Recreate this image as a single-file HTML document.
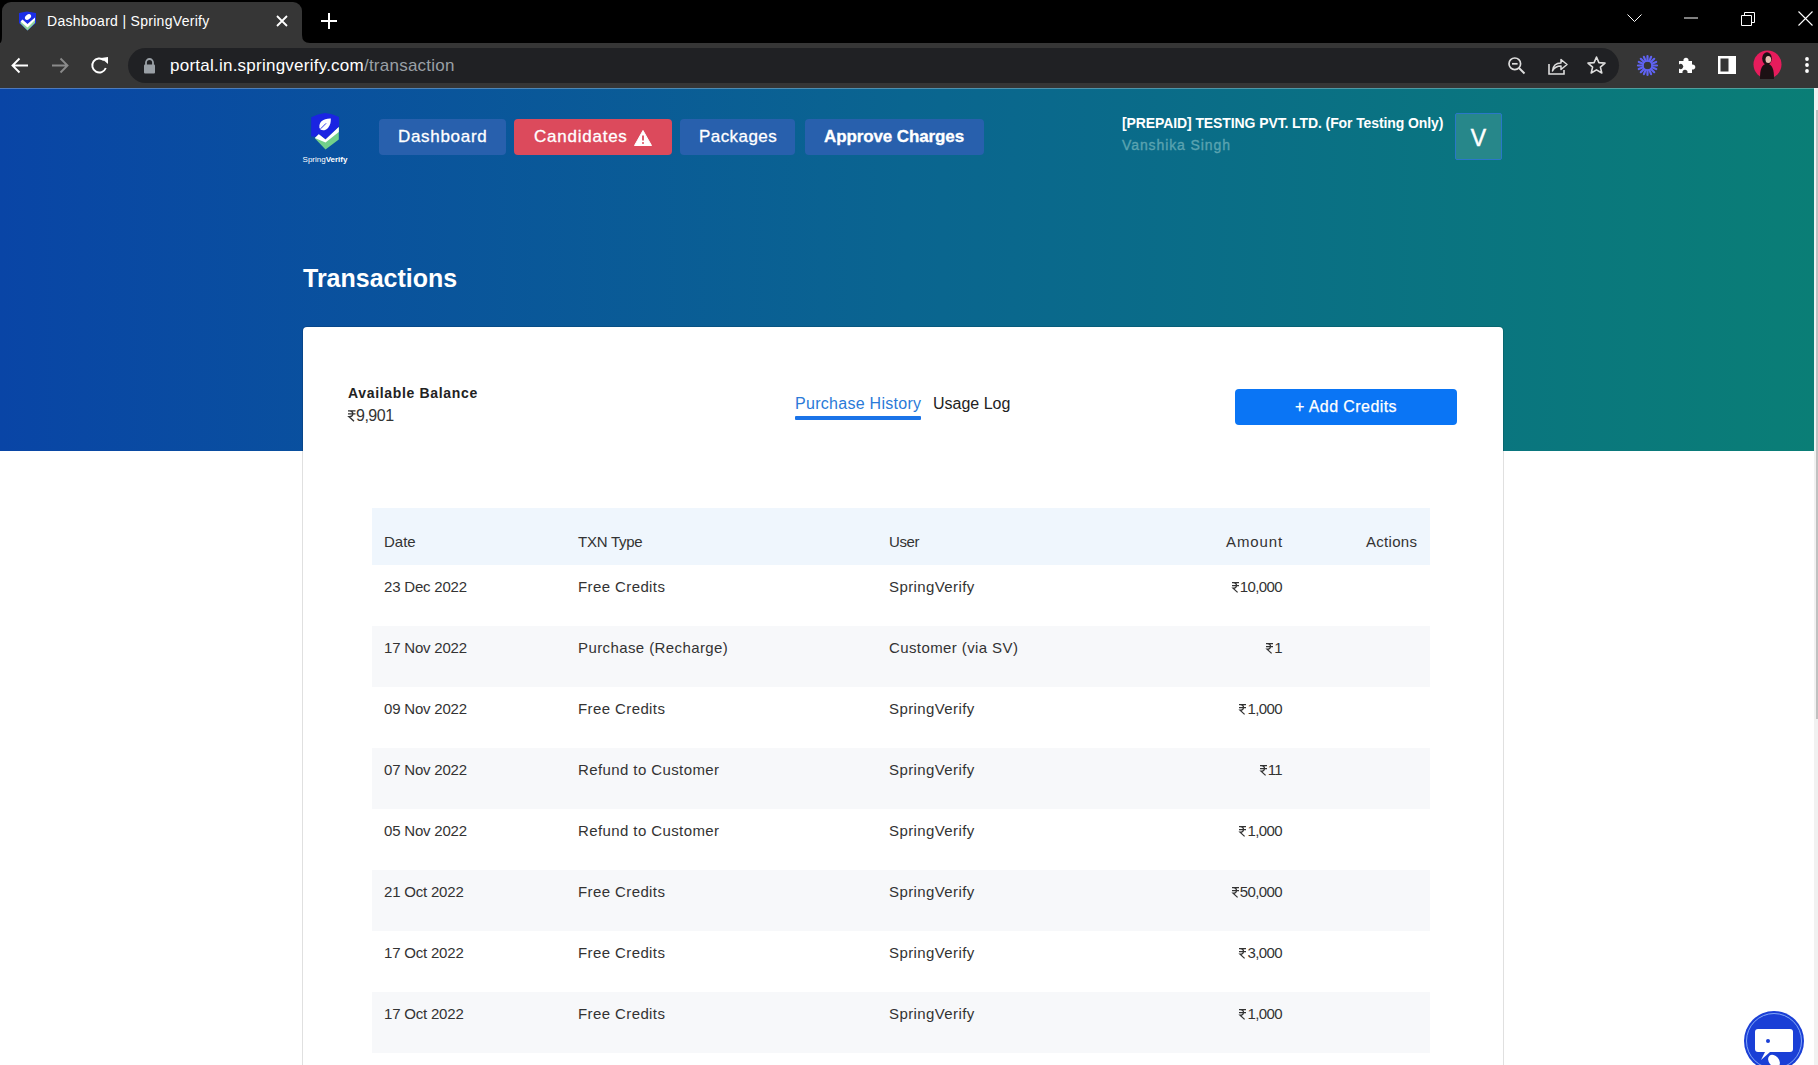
<!DOCTYPE html>
<html><head><meta charset="utf-8">
<style>
*{margin:0;padding:0;box-sizing:border-box}
html,body{width:1818px;height:1065px;overflow:hidden;background:#fff;font-family:"Liberation Sans",sans-serif}
.abs{position:absolute;white-space:nowrap}
svg{position:absolute;overflow:visible}
svg.rs{position:static;display:inline-block;width:7px;height:10.5px;vertical-align:0;margin-right:1px;overflow:visible}
#tabs{position:absolute;left:0;top:0;width:1818px;height:43px;background:#000}
#tab{position:absolute;left:2px;top:2px;width:300px;height:41px;background:#363636;border-radius:9px 9px 0 0}
#toolbar{position:absolute;left:0;top:43px;width:1818px;height:45px;background:#363636}
#omni{position:absolute;left:128px;top:48px;width:1491px;height:35px;background:#202124;border-radius:18px}
#hdr{position:absolute;left:0;top:88px;width:1814px;height:363px;background:linear-gradient(90deg,#0945a6 0%,#0a6590 50%,#0a7e76 100%)}
#hline{position:absolute;left:0;top:88px;width:1814px;height:1px;background:rgba(255,255,255,.28)}
#scroll{position:absolute;left:1814px;top:88px;width:4px;height:977px;background:#f1f1f1}
#thumb{position:absolute;left:1816px;top:110px;width:2px;height:609px;background:#c1c1c1}
.nav{position:absolute;top:119px;height:36px;border-radius:4px;background:#2860ad;color:#fff;font-size:17px;line-height:35px;white-space:nowrap;-webkit-text-stroke:0.3px #fff}
.nav span{position:absolute;top:0}
#card{position:absolute;left:303px;top:327px;width:1200px;height:760px;background:#fff;border-radius:4px;box-shadow:0 0 0 1px rgba(0,0,0,.12)}
.row{position:absolute;left:372px;width:1058px;height:61px;font-size:15px;color:#333}
.row span{position:absolute;top:13px;white-space:nowrap}
.c1{left:12px;letter-spacing:-0.2px}
.c2{left:206px;letter-spacing:0.4px}
.c3{left:517px;letter-spacing:0.4px}
.c4{right:148px;letter-spacing:-0.6px;top:13px!important;font-size:15px}
.th{position:absolute;top:533px;font-size:15px;color:#333;white-space:nowrap}
</style></head><body>
<div id="tabs"></div>
<div id="tab"></div>
<!-- tab flares -->
<svg style="left:0;top:31px" width="12" height="12"><path d="M0 12 Q2 12 2 4 L2 0 L12 0 L12 12 Z" fill="#363636"/></svg>
<svg style="left:296px;top:31px" width="14" height="12"><path d="M0 0 L6 0 L6 4 Q6 12 14 12 L0 12 Z" fill="#363636"/></svg>
<!-- favicon -->
<svg style="left:17px;top:11px" width="21" height="20" viewBox="0 0 21 20">
 <path d="M2 2 L10 0.5 L19 2 L19 12 L10.5 19.5 L2 12 Z" fill="#1b2ee6"/>
 <path d="M3 12 L10.5 19.5 L18 12 L18 8 L10.5 15 L5 10 Z" fill="#8fd49a"/>
 <path d="M3.5 10.5 L10.5 16.5 L18 9 L18 6.5 L10.5 13 L5.5 8.5 Z" fill="#fff"/>
 <ellipse cx="11" cy="6" rx="3.5" ry="2.3" transform="rotate(-40 11 6)" fill="#fff"/>
</svg>
<div class="abs" style="left:47px;top:13px;color:#fff;font-size:14px;letter-spacing:0.3px">Dashboard | SpringVerify</div>
<!-- tab close -->
<svg style="left:276px;top:15px" width="12" height="12"><path d="M1 1 L11 11 M11 1 L1 11" stroke="#fff" stroke-width="1.8"/></svg>
<!-- new tab -->
<svg style="left:321px;top:13px" width="16" height="16"><path d="M8 0 V16 M0 8 H16" stroke="#fff" stroke-width="2"/></svg>
<!-- window controls -->
<svg style="left:1627px;top:14px" width="15" height="9"><path d="M0.5 0.5 L7.5 7.5 L14.5 0.5" stroke="#fff" stroke-width="1" fill="none"/></svg>
<svg style="left:1684px;top:17px" width="14" height="2"><path d="M0 1 H14" stroke="#fff" stroke-width="1"/></svg>
<svg style="left:1741px;top:12px" width="14" height="14"><path d="M0.5 3.5 H10.5 V13.5 H0.5 Z M3.5 3.5 V0.5 H13.5 V10.5 H10.5" stroke="#fff" stroke-width="1" fill="none"/></svg>
<svg style="left:1798px;top:11px" width="15" height="15"><path d="M0.5 0.5 L14.5 14.5 M14.5 0.5 L0.5 14.5" stroke="#fff" stroke-width="1.1"/></svg>

<div id="toolbar"></div>
<!-- back / fwd / reload -->
<svg style="left:11px;top:57px" width="18" height="17" viewBox="0 0 18 17"><path d="M17 8.5 H2 M8.5 1.5 L1.5 8.5 L8.5 15.5" stroke="#fff" stroke-width="1.9" fill="none"/></svg>
<svg style="left:51px;top:57px" width="18" height="17" viewBox="0 0 18 17"><path d="M1 8.5 H16 M9.5 1.5 L16.5 8.5 L9.5 15.5" stroke="#8a8a8a" stroke-width="1.9" fill="none"/></svg>
<svg style="left:91px;top:57px" width="18" height="17" viewBox="0 0 18 17"><path d="M14.8 11 A7 7 0 1 1 13 3.3" stroke="#fff" stroke-width="1.9" fill="none"/><path d="M10 1 L17 0 L17 7 Z" fill="#fff"/></svg>
<div id="omni"></div>
<!-- lock -->
<svg style="left:143px;top:58px" width="13" height="16" viewBox="0 0 13 16"><path d="M3 7 V4.5 A3.5 3.5 0 0 1 10 4.5 V7" stroke="#9aa0a6" stroke-width="1.8" fill="none"/><rect x="1" y="6.5" width="11" height="9" rx="1" fill="#9aa0a6"/></svg>
<div class="abs" style="left:170px;top:56px;color:#fff;font-size:17px;letter-spacing:0.24px">portal.in.springverify.com<span style="color:#9aa0a6">/transaction</span></div>
<!-- zoom -->
<svg style="left:1508px;top:57px" width="18" height="17" viewBox="0 0 18 17"><circle cx="6.8" cy="6.8" r="5.8" stroke="#ddd" stroke-width="1.7" fill="none"/><path d="M4 6.8 H9.6" stroke="#ddd" stroke-width="1.7"/><path d="M11 11 L16.5 16.5" stroke="#ddd" stroke-width="2"/></svg>
<!-- share -->
<svg style="left:1548px;top:57px" width="20" height="18" viewBox="0 0 20 18"><path d="M1 7 V17 H16 V13" stroke="#ddd" stroke-width="1.6" fill="none"/><path d="M4.5 14 C5 8 9 6 13 6 V2.5 L19 7.5 L13 12.5 V9 C9 9 6.5 10 4.5 14 Z" stroke="#ddd" stroke-width="1.5" fill="none" stroke-linejoin="round"/></svg>
<!-- star -->
<svg style="left:1587px;top:56px" width="19" height="18" viewBox="0 0 19 18"><path d="M9.5 1 L11.9 6.6 L18 7.1 L13.4 11.1 L14.8 17 L9.5 13.9 L4.2 17 L5.6 11.1 L1 7.1 L7.1 6.6 Z" stroke="#ddd" stroke-width="1.6" fill="none" stroke-linejoin="round"/></svg>
<!-- ext asterisk -->
<svg style="left:1637px;top:55px" width="21" height="21" viewBox="0 0 21 21"><g stroke="#5f63f2" stroke-width="2.2" stroke-linecap="round">
<path d="M10.5 1 V20"/><path d="M1 10.5 H20"/><path d="M3.8 3.8 L17.2 17.2"/><path d="M17.2 3.8 L3.8 17.2"/><path d="M6.9 1.8 L14.1 19.2"/><path d="M14.1 1.8 L6.9 19.2"/><path d="M1.8 6.9 L19.2 14.1"/><path d="M19.2 6.9 L1.8 14.1"/></g><circle cx="10.5" cy="10.5" r="3.8" fill="#363636"/><circle cx="10.5" cy="10.5" r="4.6" stroke="#5f63f2" stroke-width="1.4" fill="none"/></svg>
<!-- puzzle -->
<svg style="left:1678px;top:56px" width="19" height="18" viewBox="0 0 19 18"><path d="M1 5 H5.5 A2.6 2.6 0 1 1 10.5 5 H14 V8.5 A2.6 2.6 0 1 1 14 13.5 V17 H9.5 A2.6 2.6 0 1 0 4.5 17 H1 V12.5 A2.6 2.6 0 1 0 1 8.5 Z" fill="#fff"/></svg>
<!-- sidebar -->
<svg style="left:1718px;top:56px" width="18" height="18" viewBox="0 0 18 18"><rect x="0" y="0" width="18" height="18" fill="#fff"/><rect x="2.5" y="2.5" width="8" height="13" fill="#363636"/></svg>
<!-- avatar -->
<svg style="left:1753px;top:51px" width="29" height="28" viewBox="0 0 29 28"><circle cx="14.5" cy="13.5" r="14" fill="#e61c5c"/><path d="M7 28 C7 18 8.5 13.5 14 12.5 C19.5 13.5 21 18 21 28 Z" fill="#1c1114"/><ellipse cx="14" cy="7.5" rx="4.8" ry="6.3" fill="#1c1114"/><ellipse cx="15.3" cy="8.6" rx="2.8" ry="3.5" fill="#e6bfb2"/></svg>
<!-- menu -->
<svg style="left:1804px;top:56px" width="6" height="18"><circle cx="3" cy="3" r="1.9" fill="#fff"/><circle cx="3" cy="9" r="1.9" fill="#fff"/><circle cx="3" cy="15" r="1.9" fill="#fff"/></svg>

<div id="hdr"></div>
<div id="hline"></div><div id="scroll"></div><div id="thumb"></div>

<!-- logo -->
<svg style="left:303px;top:112px" width="46" height="52" viewBox="0 0 46 52">
 <path d="M8.2 5.2 Q15 1.6 22 0.9 Q29 1.6 36 4.9 L36 17 L22.5 29 L12 24.5 L8.2 24.5 Z" fill="#1a24e2"/>
 <path d="M15.8 22.3 L22.5 27.6 L35.8 15 L35.8 27.5 L22.5 37.4 L11.8 26.2 Z" fill="#72d08a"/>
 <path d="M15.8 22.3 L22.5 27.4 L35.8 15 L35.8 19.9 L22.5 30.6 L11.8 26.1 Z" fill="#fff"/>
 <path d="M27.8 6.6 C20.5 6.3 15.6 10 16.4 15.8 C17.6 19.2 22.2 19 25 16 C27.6 13 27.9 9.5 27.8 6.6 Z" fill="#fff"/>
 <path d="M17.6 16.8 L23.1 11.3" stroke="#1a24e2" stroke-width="0.9"/>
 <text x="22" y="50" font-size="8" fill="#fff" text-anchor="middle" font-family="Liberation Sans">Spring<tspan font-weight="bold">Verify</tspan></text>
</svg>

<div class="nav" style="left:379px;width:127px"><span style="left:19px;letter-spacing:0.69px">Dashboard</span></div>
<div class="nav" style="left:514px;width:158px;background:#dc4a5c"><span style="left:20px;letter-spacing:0.76px">Candidates</span>
 <svg style="left:120px;top:11px" width="18" height="16" viewBox="0 0 18 16"><path d="M9 0.5 L17.5 15.5 H0.5 Z" fill="#fff" stroke="#fff" stroke-linejoin="round"/><path d="M9 5.5 V10.5" stroke="#dc4a5c" stroke-width="1.8"/><circle cx="9" cy="13" r="1" fill="#dc4a5c"/></svg></div>
<div class="nav" style="left:680px;width:115px"><span style="left:19px;letter-spacing:0.43px">Packages</span></div>
<div class="nav" style="left:805px;width:179px;font-weight:bold"><span style="left:19px;letter-spacing:-0.11px">Approve Charges</span></div>

<div class="abs" style="left:1122px;top:115px;color:#fff;font-size:14px;font-weight:bold;letter-spacing:-0.1px">[PREPAID] TESTING PVT. LTD. (For Testing Only)</div>
<div class="abs" style="left:1122px;top:137px;color:#5aa3b0;font-size:14px;letter-spacing:0.9px;-webkit-text-stroke:0.35px #5aa3b0">Vanshika Singh</div>
<div class="abs" style="left:1455px;top:113px;width:47px;height:47px;background:#27878a;border:1px solid #2a77c8;border-radius:2px;color:#fff;font-size:23px;line-height:49px;text-align:center;-webkit-text-stroke:0.5px #fff">V</div>

<div class="abs" style="left:303px;top:264px;color:#fff;font-size:25px;font-weight:bold">Transactions</div>

<div id="card"></div>
<div class="abs" style="left:348px;top:385px;color:#222;font-size:14px;font-weight:bold;letter-spacing:0.67px">Available Balance</div>
<div class="abs" style="left:348px;top:407px;color:#333;font-size:16px;letter-spacing:-0.5px"><svg class="rs" viewBox="0 0 7 10.5" style="width:7.5px;height:11.5px;margin-right:0.5px"><path d="M0 0.7 H7 M0 3.5 H7 M1.3 0.7 C5.6 0.7 5.6 6.2 1 6.2 L5.6 10.4" stroke="currentColor" stroke-width="1.35" fill="none"/></svg>9,901</div>

<div class="abs" style="left:795px;top:395px;color:#2a7ad8;font-size:16px;letter-spacing:0.28px">Purchase History</div>
<div class="abs" style="left:795px;top:416px;width:126px;height:4px;background:#1a73e8;border-radius:1px"></div>
<div class="abs" style="left:933px;top:395px;color:#222;font-size:16px">Usage Log</div>
<div class="abs" style="left:1235px;top:389px;width:222px;height:36px;background:#0a75f5;border-radius:4px;color:#fff;font-size:16px;line-height:36px;text-align:center;letter-spacing:0.42px;-webkit-text-stroke:0.25px #fff">+ Add Credits</div>

<div class="abs" style="left:372px;top:508px;width:1058px;height:57px;background:#eff6fd"></div>
<div class="th" style="left:384px">Date</div>
<div class="th" style="left:578px;letter-spacing:-0.25px">TXN Type</div>
<div class="th" style="left:889px;letter-spacing:-0.4px">User</div>
<div class="th" style="left:1226px;letter-spacing:0.9px">Amount</div>
<div class="th" style="left:1366px;letter-spacing:0.3px">Actions</div>
<div class="row" style="top:565px;background:#fff"><span class="c1">23 Dec 2022</span><span class="c2">Free Credits</span><span class="c3">SpringVerify</span><span class="c4"><svg class="rs" viewBox="0 0 7 10.5"><path d="M0 0.7 H7 M0 3.5 H7 M1.3 0.7 C5.6 0.7 5.6 6.2 1 6.2 L5.6 10.4" stroke="currentColor" stroke-width="1.25" fill="none"/></svg>10,000</span></div>
<div class="row" style="top:626px;background:#f7f8fa"><span class="c1">17 Nov 2022</span><span class="c2">Purchase (Recharge)</span><span class="c3">Customer (via SV)</span><span class="c4"><svg class="rs" viewBox="0 0 7 10.5"><path d="M0 0.7 H7 M0 3.5 H7 M1.3 0.7 C5.6 0.7 5.6 6.2 1 6.2 L5.6 10.4" stroke="currentColor" stroke-width="1.25" fill="none"/></svg>1</span></div>
<div class="row" style="top:687px;background:#fff"><span class="c1">09 Nov 2022</span><span class="c2">Free Credits</span><span class="c3">SpringVerify</span><span class="c4"><svg class="rs" viewBox="0 0 7 10.5"><path d="M0 0.7 H7 M0 3.5 H7 M1.3 0.7 C5.6 0.7 5.6 6.2 1 6.2 L5.6 10.4" stroke="currentColor" stroke-width="1.25" fill="none"/></svg>1,000</span></div>
<div class="row" style="top:748px;background:#f7f8fa"><span class="c1">07 Nov 2022</span><span class="c2">Refund to Customer</span><span class="c3">SpringVerify</span><span class="c4"><svg class="rs" viewBox="0 0 7 10.5"><path d="M0 0.7 H7 M0 3.5 H7 M1.3 0.7 C5.6 0.7 5.6 6.2 1 6.2 L5.6 10.4" stroke="currentColor" stroke-width="1.25" fill="none"/></svg>11</span></div>
<div class="row" style="top:809px;background:#fff"><span class="c1">05 Nov 2022</span><span class="c2">Refund to Customer</span><span class="c3">SpringVerify</span><span class="c4"><svg class="rs" viewBox="0 0 7 10.5"><path d="M0 0.7 H7 M0 3.5 H7 M1.3 0.7 C5.6 0.7 5.6 6.2 1 6.2 L5.6 10.4" stroke="currentColor" stroke-width="1.25" fill="none"/></svg>1,000</span></div>
<div class="row" style="top:870px;background:#f7f8fa"><span class="c1">21 Oct 2022</span><span class="c2">Free Credits</span><span class="c3">SpringVerify</span><span class="c4"><svg class="rs" viewBox="0 0 7 10.5"><path d="M0 0.7 H7 M0 3.5 H7 M1.3 0.7 C5.6 0.7 5.6 6.2 1 6.2 L5.6 10.4" stroke="currentColor" stroke-width="1.25" fill="none"/></svg>50,000</span></div>
<div class="row" style="top:931px;background:#fff"><span class="c1">17 Oct 2022</span><span class="c2">Free Credits</span><span class="c3">SpringVerify</span><span class="c4"><svg class="rs" viewBox="0 0 7 10.5"><path d="M0 0.7 H7 M0 3.5 H7 M1.3 0.7 C5.6 0.7 5.6 6.2 1 6.2 L5.6 10.4" stroke="currentColor" stroke-width="1.25" fill="none"/></svg>3,000</span></div>
<div class="row" style="top:992px;background:#f7f8fa"><span class="c1">17 Oct 2022</span><span class="c2">Free Credits</span><span class="c3">SpringVerify</span><span class="c4"><svg class="rs" viewBox="0 0 7 10.5"><path d="M0 0.7 H7 M0 3.5 H7 M1.3 0.7 C5.6 0.7 5.6 6.2 1 6.2 L5.6 10.4" stroke="currentColor" stroke-width="1.25" fill="none"/></svg>1,000</span></div>

<!-- chat widget -->
<svg style="left:1743px;top:1010px" width="62" height="62" viewBox="0 0 62 62"><circle cx="31" cy="31" r="30" fill="#1a3fd6"/><circle cx="31" cy="31" r="27.5" stroke="#9ec3ff" stroke-width="0.8" fill="none"/><rect x="12" y="19" width="38" height="23" rx="3" fill="#fff"/><circle cx="25" cy="31" r="2" fill="#1a3fd6"/><path d="M22 42 L18 50 L27 42 Z" fill="#fff"/><ellipse cx="31" cy="51" rx="5" ry="7" transform="rotate(-40 31 51)" fill="#fff"/></svg>
</body></html>
